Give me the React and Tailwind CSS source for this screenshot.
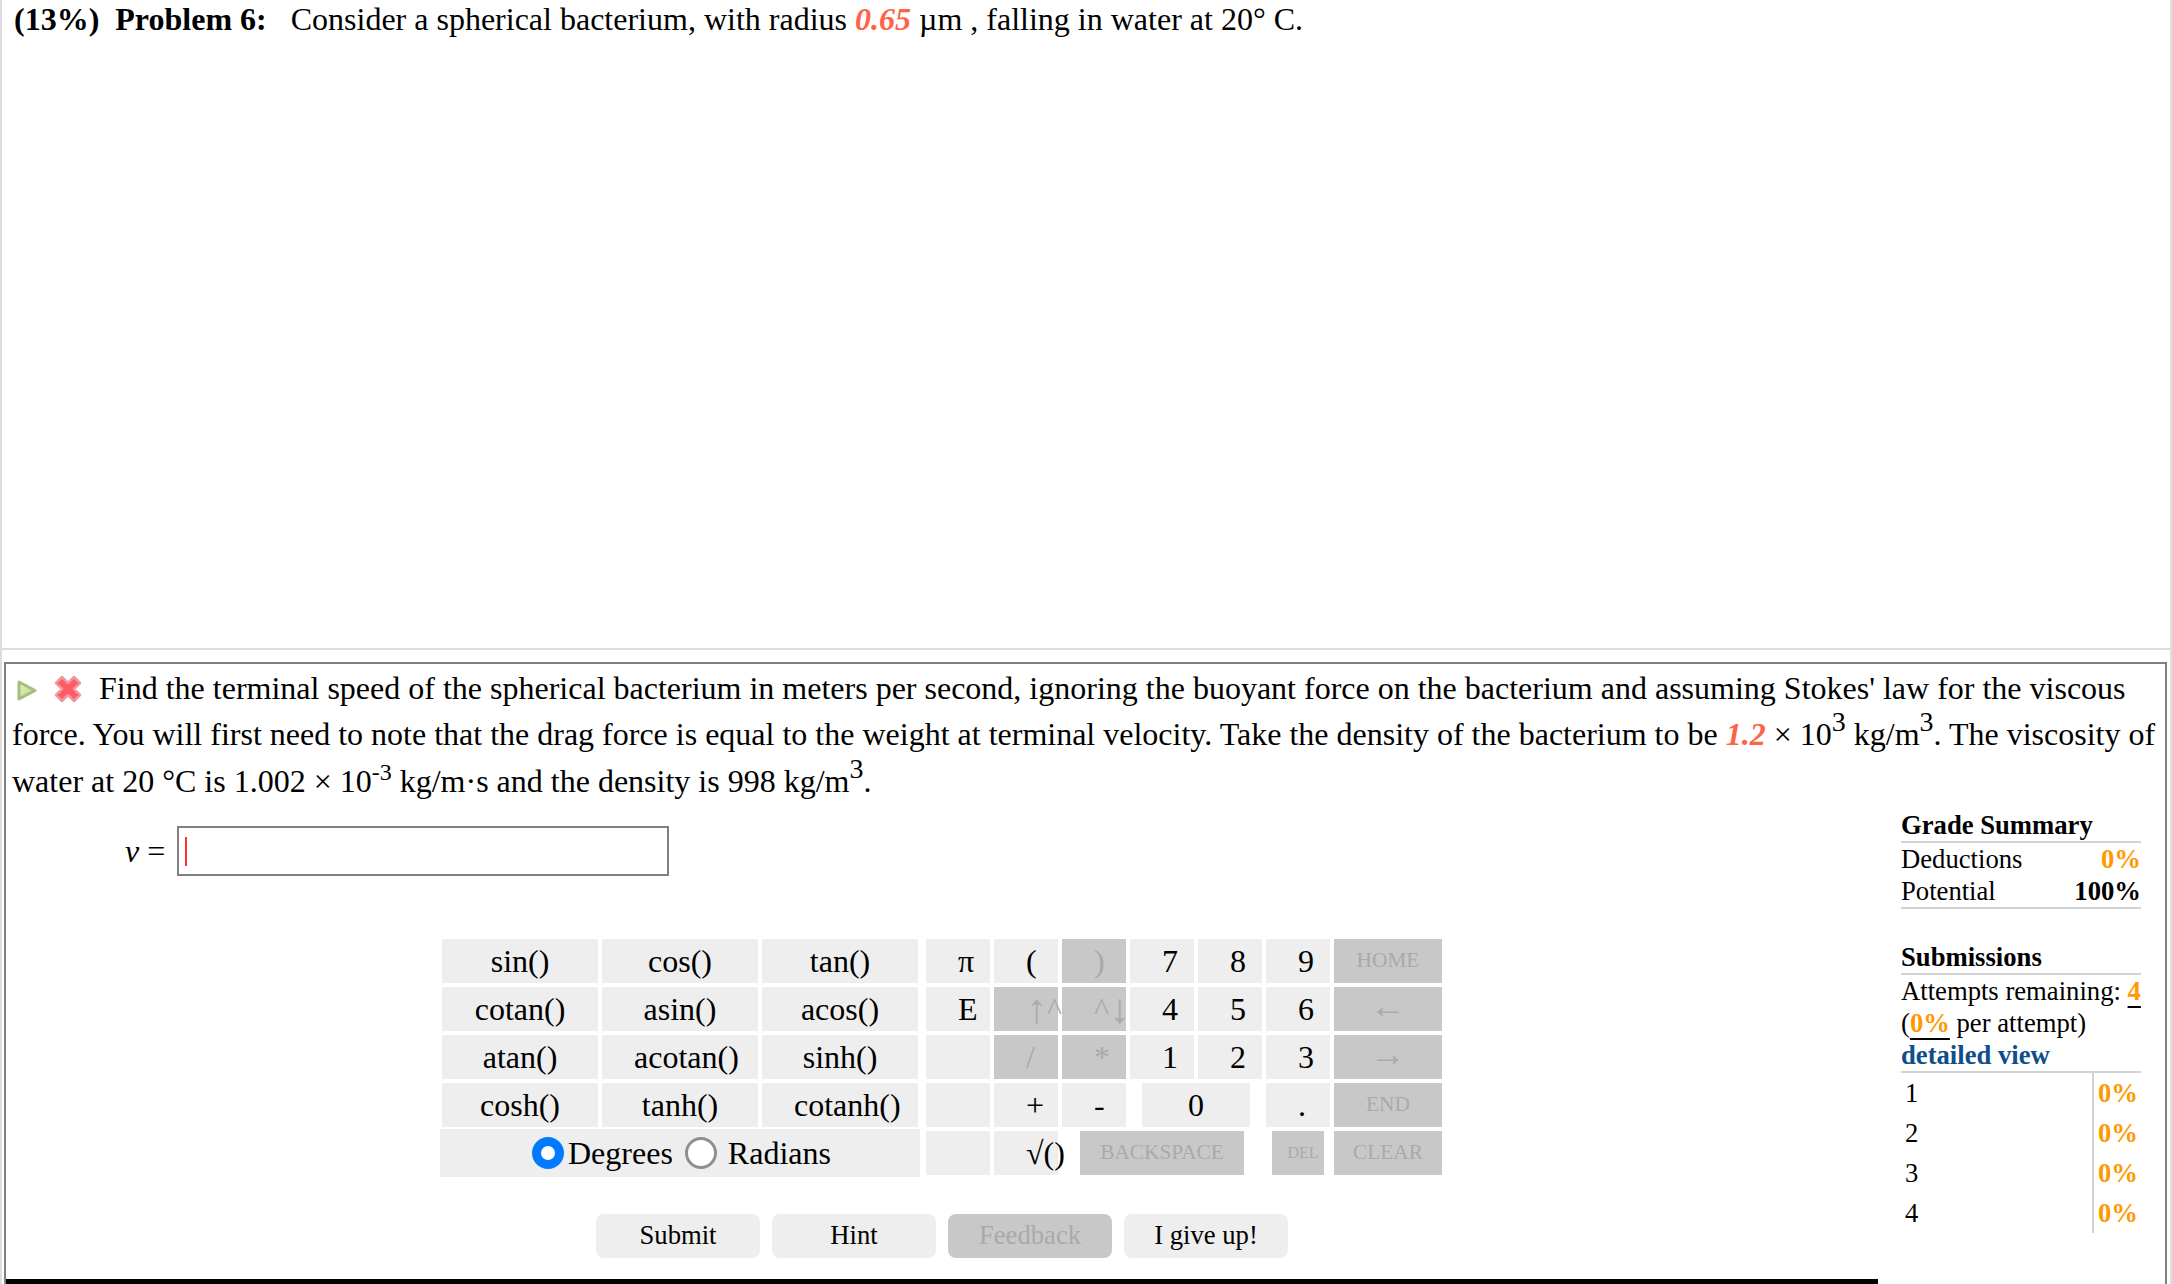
const Key = ({ w = "w-[64px]", off, size = "text-[32px] pb-[1px]", ml = "", children }) => (
  <div
    className={`${w} ${ml} ${size} h-[44px] shrink-0 flex items-center whitespace-nowrap ${
      w === "w-[64px]" ? "justify-start pl-[32px]" : "justify-center"
    } ${off ? "bg-[#c8c8c8] text-[#aaaaaa]" : "bg-[#eeeeee] text-black"}`}
  >
    {children}
  </div>
);

const Row = ({ children }) => <div className="flex gap-1 h-[44px]">{children}</div>;

// long names overflow to the right, same as the padded buttons in the picture
const Fn = ({ children }) => (
  <Key w="w-[156px]">
    <span className="w-[92px] text-center">{children}</span>
  </Key>
);

const Btn = ({ off, children }) => (
  <div
    className={`w-[164px] h-[44px] pb-[2px] rounded-lg flex items-center justify-center text-[26.67px] ${
      off ? "bg-[#c8c8c8] text-[#aaaaaa]" : "bg-[#eeeeee] text-black"
    }`}
  >
    {children}
  </div>
);

const PlayIcon = () => (
  <svg width="22" height="23" viewBox="0 0 22 23" className="absolute left-[10px] top-[15px] blur-[0.4px]">
    <defs>
      <linearGradient id="pl" x1="0" y1="0" x2="1" y2="1">
        <stop offset="0" stopColor="#e4f2c0" />
        <stop offset="1" stopColor="#b4dc78" />
      </linearGradient>
    </defs>
    <path d="M3 3 L19 11.5 L3 20 Z" fill="url(#pl)" stroke="#a3bf7e" strokeWidth="3" strokeLinejoin="round" />
  </svg>
);

const CrossIcon = () => (
  <svg width="28" height="28" viewBox="0 0 28 28" className="absolute left-[48px] top-[11px] blur-[0.4px]">
    <path
      d="M8 2 L14 8 L20 2 L26 8 L20 14 L26 20 L20 26 L14 20 L8 26 L2 20 L8 14 L2 8 Z"
      fill="#ff5a66"
      stroke="#eb9aa0"
      strokeWidth="2.5"
      strokeLinejoin="round"
    />
  </svg>
);

const Val = ({ children }) => <span className="font-bold italic text-[#ff6347]">{children}</span>;

const Pct = ({ children }) => <span className="font-bold text-[#ff9900]">{children}</span>;

const Arrow = ({ children }) => <span className="text-[42px] leading-none">{children}</span>;

const Sup = ({ children }) => <sup className="text-[28px]">{children}</sup>;

const Sidebar = () => (
  <div className="w-[240px] ml-[23px] pt-[7px] text-[26.67px] leading-[32px] text-black">
    <div className="font-bold border-b-2 border-[#d3d3d3] h-[34px] whitespace-nowrap">Grade Summary</div>
    <div className="flex justify-between">
      <span>Deductions</span>
      <Pct>0%</Pct>
    </div>
    <div className="flex justify-between border-b-2 border-[#d3d3d3] h-[34px]">
      <span>Potential</span>
      <span className="font-bold">100%</span>
    </div>
    <div className="font-bold border-b-2 border-[#d3d3d3] mt-[32px] h-[34px]">Submissions</div>
    <div className="whitespace-nowrap">
      Attempts remaining:{" "}
      <span className="font-bold text-[#ff9900] underline decoration-black decoration-2 underline-offset-[6px]">4</span>
    </div>
    <div>
      (<span className="font-bold text-[#ff9900] underline decoration-black decoration-2 underline-offset-[6px]">0%</span> per attempt)
    </div>
    <div className="font-bold text-[#104e8b] border-b-2 border-[#d3d3d3] h-[34px]">detailed view</div>
    {[1, 2, 3, 4].map((n) => (
      <div key={n} className="flex h-[40px] items-center">
        <span className="w-[191px] pl-[4px]">{n}</span>
        <span className="flex-1 h-full flex items-center border-l-2 border-[#d3d3d3] pl-[4px]">
          <Pct>0%</Pct>
        </span>
      </div>
    ))}
  </div>
);

const Keypad = () => (
  <div className="ml-[436px] mt-[63px] flex flex-col gap-1 w-[1000px]">
    <Row>
      <Fn>sin()</Fn>
      <Fn>cos()</Fn>
      <Fn>tan()</Fn>
      <Key ml="ml-1">π</Key>
      <Key>(</Key>
      <Key off>)</Key>
      <Key>7</Key>
      <Key>8</Key>
      <Key>9</Key>
      <Key off w="w-[108px]" size="text-[21.33px]">HOME</Key>
    </Row>
    <Row>
      <Fn>cotan()</Fn>
      <Fn>asin()</Fn>
      <Fn>acos()</Fn>
      <Key ml="ml-1">E</Key>
      <Key off><Arrow>↑</Arrow>^</Key>
      <Key off>^<Arrow>↓</Arrow></Key>
      <Key>4</Key>
      <Key>5</Key>
      <Key>6</Key>
      <Key off w="w-[108px]" size="text-[36px] pb-[7px]">←</Key>
    </Row>
    <Row>
      <Fn>atan()</Fn>
      <Fn>acotan()</Fn>
      <Fn>sinh()</Fn>
      <Key ml="ml-1"></Key>
      <Key off>/</Key>
      <Key off>*</Key>
      <Key>1</Key>
      <Key>2</Key>
      <Key>3</Key>
      <Key off w="w-[108px]" size="text-[36px] pb-[7px]">→</Key>
    </Row>
    <Row>
      <Fn>cosh()</Fn>
      <Fn>tanh()</Fn>
      <Fn>cotanh()</Fn>
      <Key ml="ml-1"></Key>
      <Key>+</Key>
      <Key>-</Key>
      <Key w="w-[108px]" ml="ml-3">0</Key>
      <Key ml="ml-3">.</Key>
      <Key off w="w-[108px]" size="text-[21.33px]">END</Key>
    </Row>
    <Row>
      <div className="w-[480px] h-[48px] -ml-[2px] -mt-[2px] pb-[1px] bg-[#eeeeee] shrink-0 flex items-center text-[32px] pl-[92px]">
        <span className="size-8 rounded-full bg-[#007aff] flex items-center justify-center">
          <span className="size-[14px] rounded-full bg-white" />
        </span>
        <span className="ml-[4px]">Degrees</span>
        <span className="size-8 rounded-full border-[3px] border-[#8e8e93] bg-white ml-[12px]" />
        <span className="ml-[11px]">Radians</span>
      </div>
      <Key ml="ml-[2px]"></Key>
      <Key>√()</Key>
      <Key off w="w-[164px]" size="text-[21.33px]" ml="ml-[18px]">BACKSPACE</Key>
      <Key off w="w-[52px]" size="text-[16px] pl-[10px]" ml="ml-6">DEL</Key>
      <Key off w="w-[108px]" size="text-[21.33px]" ml="ml-1.5">CLEAR</Key>
    </Row>
  </div>
);

export default function App() {
  return (
    <div className="w-[2172px] h-[1284px] overflow-hidden bg-white text-black font-['Liberation_Serif',serif]">
      <div className="h-[650px] border-x-2 border-b-2 border-[#dddddd] pl-[12px] text-[32px] leading-[38px]">
        <b>(13%)&nbsp; Problem 6:</b>&nbsp;&nbsp; Consider a spherical bacterium, with radius <Val>0.65</Val> µm , falling in water at 20° C.
      </div>
      <div className="h-[634px] border-x-2 border-[#dddddd] pt-[12px] pl-[2px] pr-[3px]">
        <div className="h-[640px] border-2 border-[#808080] border-b-0 relative">
          <PlayIcon />
          <CrossIcon />
          <p className="text-[32px] leading-[46.4px] h-[138px] pt-[1px] pl-[6px] whitespace-nowrap">
            <span className="pl-[87px]">Find the terminal speed of the spherical bacterium in meters per second, ignoring the buoyant force on the bacterium and assuming Stokes' law for the viscous</span>
            <br />
            force. You will first need to note that the drag force is equal to the weight at terminal velocity. Take the density of the bacterium to be <Val>1.2</Val> × 10<Sup>3</Sup> kg/m<Sup>3</Sup>. The viscosity of
            <br />
            water at 20 °C is 1.002 × 10<sup>-3</sup> kg/m·s and the density is 998 kg/m<Sup>3</Sup>.
          </p>
          <div className="flex">
            <div className="w-[1872px] h-[482px] border-b-[5px] border-black">
              <div className="flex items-center pl-[119px] pt-[24px]">
                <span className="text-[32px] w-[52px] whitespace-nowrap">
                  <i>v</i> =
                </span>
                <div className="w-[492px] h-[50px] border-2 border-[#808080] flex items-center pl-[6px]">
                  <span className="w-[2px] h-[29px] bg-[#ff3030]" />
                </div>
              </div>
              <Keypad />
              <div className="flex gap-3 ml-[590px] mt-[39px]">
                <Btn>Submit</Btn>
                <Btn>Hint</Btn>
                <Btn off>Feedback</Btn>
                <Btn>I give up!</Btn>
              </div>
            </div>
            <Sidebar />
          </div>
        </div>
      </div>
    </div>
  );
}
